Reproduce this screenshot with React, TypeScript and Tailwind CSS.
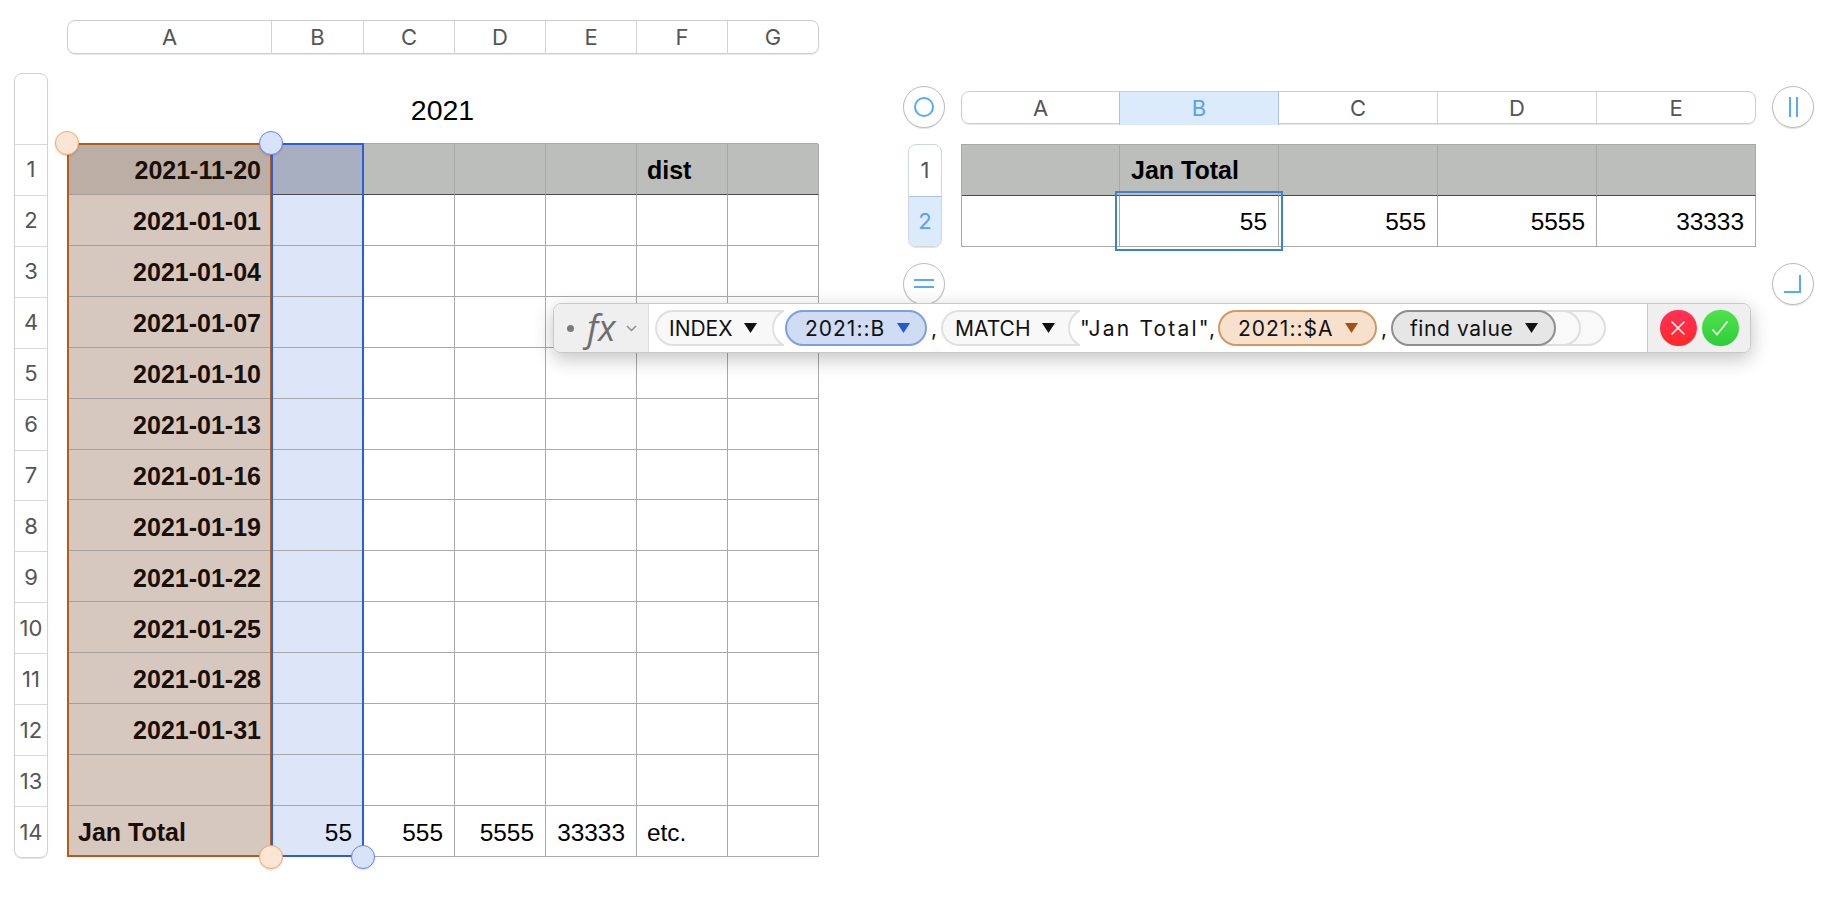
import type { ReactNode } from 'react';

const leftCols = ['A', 'B', 'C', 'D', 'E', 'F', 'G'];
const rightCols = ['A', 'B', 'C', 'D', 'E'];
const dates = [
  '2021-11-20', '2021-01-01', '2021-01-04', '2021-01-07', '2021-01-10', '2021-01-13', '2021-01-16',
  '2021-01-19', '2021-01-22', '2021-01-25', '2021-01-28', '2021-01-31', '', 'Jan Total',
];
const lastRow = ['55', '555', '5555', '33333', 'etc.', ''];

function Triangle({ className }: { className: string }) {
  return (
    <svg width="13" height="10" viewBox="0 0 13 10" className={`shrink-0 ${className}`}>
      <polygon points="0,0 13,0 6.5,10" fill="currentColor" />
    </svg>
  );
}

function RoundButton({ children }: { children: ReactNode }) {
  return (
    <div className="flex h-[42px] w-[42px] items-center justify-center rounded-full border border-[#bdbdbd] bg-white shadow-[0_1px_1px_rgba(0,0,0,0.12)]">
      {children}
    </div>
  );
}

function Handle({ className }: { className: string }) {
  return <div className={`absolute z-10 h-6 w-6 rounded-full border shadow-[0_1px_2px_rgba(0,0,0,0.15)] ${className}`} />;
}

function OpenPill({ label, width }: { label: string; width: string }) {
  return (
    <div className={`relative flex h-9 shrink-0 items-center overflow-hidden rounded-l-[18px] border-y-2 border-l-2 border-[#e0e0e0] bg-[#f8f8f8] pl-3 ${width}`}>
      <span className="pt-[1px]">{label}</span>
      <Triangle className="ml-[11px] text-[#111]" />
      <div className="absolute top-[-4px] right-[-28px] h-10 w-10 rounded-full border-2 border-[#e0e0e0] bg-white" />
    </div>
  );
}

function LeftSheet() {
  return (
    <div className="w-[880px] shrink-0 pt-5 pl-[14px]">
      <div className="ml-[53px] grid h-[34px] w-[752px] grid-cols-[204px_92px_91px_91px_91px_91px_1fr] rounded-lg border border-[#cdcdcd] shadow-[0_1px_1px_rgba(0,0,0,0.1)]">
        {leftCols.map((c, i) => (
          <div key={c} className={`flex items-center justify-center text-[22px] text-[#555] ${i < 6 ? 'border-r border-[#d2d2d2]' : ''}`}>
            {c}
          </div>
        ))}
      </div>

      <div className="mt-[19px] flex">
        <div className="w-[34px] rounded-lg border border-[#d2d2d2] shadow-[0_1px_1px_rgba(0,0,0,0.12)]">
          <div className="h-[70px]" />
          <div className="grid h-[713px] grid-rows-[repeat(14,1fr)]">
            {dates.map((_, i) => (
              <div key={i} className="flex items-center justify-center border-t border-[#d8d8d8] text-[22px] text-[#555]">
                {i + 1}
              </div>
            ))}
          </div>
        </div>

        <div className="ml-[19px] w-[751px]">
          <div className="flex h-[70px] items-center justify-center pt-1 font-['Liberation_Sans'] text-[28.5px] text-black">2021</div>

          <div className="relative grid h-[714px] grid-cols-[204px_92px_91px_91px_91px_91px_91px] grid-rows-[repeat(14,1fr)] border-t border-l border-[#a9a9a9] font-['Liberation_Sans'] text-[24.4px] text-black">
            {dates.map((d, r) => (
              <div key={r} className="contents">
                <div className={`flex items-center border-r border-b border-[#a3a09c] px-[10px] pt-1 text-[25px] font-bold text-[#1a0f08] ${r === 13 ? 'justify-start' : 'justify-end'} ${r === 0 ? 'bg-[#bbaea5]' : 'bg-[#d6c8bf]'}`}>
                  {d}
                </div>
                {lastRow.map((v, c) => (
                  <div
                    key={c}
                    className={`flex items-center border-r border-b pt-1 pr-[11px] pl-[10px]
                      ${r === 0 ? 'border-r-[#a8a8a8] border-b-[#4a4a4a]' : 'border-[#a9a9a9]'}
                      ${r === 0 && c === 0 ? 'bg-[#a7afc1]' : r === 0 ? 'bg-[#bcbebc]' : c === 0 ? 'bg-[#dde6f9]' : 'bg-white'}
                      ${c === 4 ? 'justify-start' : 'justify-end'}
                      ${r === 0 && c === 4 ? 'text-[25px] font-bold' : ''}`}
                  >
                    {r === 13 ? v : r === 0 && c === 4 ? 'dist' : ''}
                  </div>
                ))}
              </div>
            ))}

            <div className="pointer-events-none absolute top-[-1px] bottom-0 left-[-1px] w-[204px] border-2 border-r-[1.5px] border-[#b85a1a]" />
            <div className="pointer-events-none absolute top-[-1px] bottom-0 left-[203px] w-[93px] border-2 border-[#2a5fdc]" />
            <Handle className="top-[-13px] left-[-13px] border-[#f6a766] bg-[#fbe6d5]" />
            <Handle className="top-[-13px] left-[191px] border-[#6a85f0] bg-[#d7e3f8]" />
            <Handle className="bottom-[-12px] left-[191px] border-[#f6a766] bg-[#fbe6d5]" />
            <Handle className="bottom-[-12px] left-[283px] border-[#6a85f0] bg-[#d7e3f8]" />
          </div>
        </div>
      </div>
    </div>
  );
}

function RightSheet() {
  return (
    <div className="grid grid-cols-[58px_795px_58px] grid-rows-[43px_103px_41px] gap-y-4 pt-[85px] pl-[23px]">
      <div className="flex items-center">
        <RoundButton>
          <div className="h-5 w-5 rounded-full border-2 border-[#56aaf8]" />
        </RoundButton>
      </div>
      <div className="mt-[2px] grid h-[33px] grid-cols-[157px_160px_159px_159px_1fr] self-center rounded-lg border border-[#cdcdcd] shadow-[0_1px_1px_rgba(0,0,0,0.1)]">
        {rightCols.map((c, i) => (
          <div
            key={c}
            className={`flex items-center justify-center text-[22px] ${i === 1 ? 'border-x border-[#a9c3de] bg-[#dcebfb] text-[#56a0ee]' : 'text-[#555]'} ${i > 1 && i < 4 ? 'border-r border-[#d2d2d2]' : ''}`}
          >
            {c}
          </div>
        ))}
      </div>
      <div className="flex items-center justify-end">
        <RoundButton>
          <div className="flex gap-[5px]">
            <div className="h-5 w-[2px] bg-[#56aaf8]" />
            <div className="h-5 w-[2px] bg-[#56aaf8]" />
          </div>
        </RoundButton>
      </div>

      <div className="pl-[5px]">
        <div className="grid h-[103px] w-[34px] grid-rows-2 overflow-hidden rounded-lg border border-[#cfd6de] text-[22px] shadow-[0_1px_1px_rgba(0,0,0,0.12)]">
          <div className="flex items-center justify-center text-[#555]">1</div>
          <div className="flex items-center justify-center border-t border-[#a9c3de] bg-[#dcebfb] text-[#56a0ee]">2</div>
        </div>
      </div>
      <div className="relative grid h-[103px] grid-cols-[158px_159px_159px_159px_159px] grid-rows-2 border-t border-l border-[#a9a9a9] font-['Liberation_Sans'] text-[24.4px] text-black">
        {[0, 1, 2, 3, 4].map((c) => (
          <div key={c} className="flex items-center border-r border-b border-r-[#a8a8a8] border-b-[#4a4a4a] bg-[#bcbebc] px-[11px] pt-[2px] text-[25px] font-bold">
            {c === 1 ? 'Jan Total' : ''}
          </div>
        ))}
        {['', '55', '555', '5555', '33333'].map((v, c) => (
          <div key={c} className="flex items-center justify-end border-r border-b border-[#a9a9a9] px-[11px] pt-[2px]">
            {v}
          </div>
        ))}
        <div className="pointer-events-none absolute top-[46px] left-[153px] h-[60px] w-[168px] border-2 border-[#3a82d2]" />
      </div>
      <div />

      <div className="flex items-center">
        <RoundButton>
          <div className="flex flex-col gap-[5px]">
            <div className="h-[2px] w-5 bg-[#56aaf8]" />
            <div className="h-[2px] w-5 bg-[#56aaf8]" />
          </div>
        </RoundButton>
      </div>
      <div />
      <div className="flex items-center justify-end">
        <RoundButton>
          <div className="ml-[-1px] h-[18px] w-[17px] border-r-2 border-b-2 border-[#56aaf8]" />
        </RoundButton>
      </div>
    </div>
  );
}

function FormulaBar() {
  return (
    <div className="absolute top-[303px] left-[553px] z-20 flex h-[50px] w-[1198px] overflow-hidden rounded-lg border border-[#c9c9c9] bg-white text-[21px] whitespace-nowrap text-[#111] shadow-[0_6px_20px_rgba(0,0,0,0.24)]">
      <div className="flex w-[95px] shrink-0 items-center border-r border-[#dcdcdc] bg-[#efefef] pl-[13px]">
        <div className="h-[7px] w-[7px] rounded-full bg-[#7b7b7b]" />
        <span className="ml-[13px] font-['Open_Sans'] text-[36px] leading-none text-[#6e6e6e] italic">fx</span>
        <svg width="11" height="7" viewBox="0 0 11 7" className="ml-[10px]">
          <path d="M1 1l4.5 4.5L10 1" fill="none" stroke="#8a8a8a" strokeWidth="1.4" />
        </svg>
      </div>

      <div className="flex flex-1 items-center pl-[6px]">
        <OpenPill label="INDEX" width="w-[129px]" />
        <div className="ml-[1px] flex h-9 w-[142px] shrink-0 items-center rounded-full border-2 border-[#7da0e4] bg-[#cfdcf3] pl-[18px]">
          <span className="pt-[1px] tracking-[1px]">2021::B</span>
          <Triangle className="ml-3 text-[#1f5ccc]" />
        </div>
        <span className="w-[14px] shrink-0 pt-[1px] text-center">,</span>
        <OpenPill label="MATCH" width="w-[139px]" />
        <span className="w-[138px] shrink-0 pt-[1px] tracking-[2.2px]">"Jan Total",</span>
        <div className="flex h-9 w-[159px] shrink-0 items-center rounded-full border-2 border-[#d09a60] bg-[#f7e0cc] pl-[18px]">
          <span className="pt-[1px] tracking-[1px]">2021::$A</span>
          <Triangle className="ml-3 text-[#a5501c]" />
        </div>
        <span className="w-[14px] shrink-0 pt-[1px] text-center">,</span>
        <div className="relative z-20 flex h-9 w-[165px] shrink-0 items-center rounded-full border-2 border-[#8e8e8e] bg-[#e6e6e6] pl-[17px]">
          <span className="pt-[1px] tracking-[0.6px]">find value</span>
          <Triangle className="ml-3 text-[#111]" />
        </div>
        <div className="relative z-10 ml-[-25px] h-9 w-[50px] shrink-0 rounded-r-full border-y-2 border-r-2 border-[#dedede] bg-[#f9f9f9]" />
        <div className="ml-[-25px] h-9 w-[50px] shrink-0 rounded-r-full border-y-2 border-r-2 border-[#dedede] bg-[#f9f9f9]" />
      </div>

      <div className="flex w-[103px] shrink-0 items-center justify-center gap-[5px] border-l border-[#c9c9c9] bg-[#efefef]">
        <div className="flex h-9 w-[37px] items-center justify-center rounded-full bg-gradient-to-b from-[#ff3058] to-[#ff2a20]">
          <svg width="16" height="16" viewBox="0 0 16 16">
            <path d="M1.5 1.5l13 13M14.5 1.5l-13 13" stroke="white" strokeWidth="1.5" fill="none" />
          </svg>
        </div>
        <div className="flex h-9 w-[37px] items-center justify-center rounded-full bg-gradient-to-b from-[#4fe24c] to-[#2bce38]">
          <svg width="18" height="16" viewBox="0 0 18 16">
            <path d="M1.5 9.5l4.5 5L16.5 1.5" stroke="white" strokeWidth="1.5" fill="none" />
          </svg>
        </div>
      </div>
    </div>
  );
}

export default function App() {
  return (
    <div className="relative flex h-[900px] w-[1836px] overflow-hidden bg-white font-['Inter','Liberation_Sans',sans-serif]">
      <LeftSheet />
      <RightSheet />
      <FormulaBar />
    </div>
  );
}
